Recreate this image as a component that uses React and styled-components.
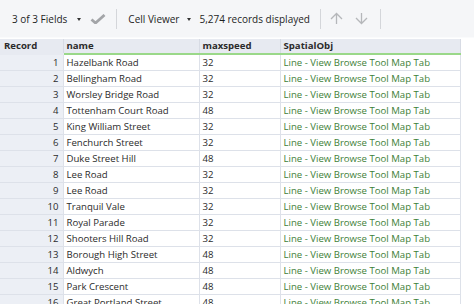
import React from "react";
import styled, { createGlobalStyle } from "styled-components";

const Global = createGlobalStyle`
  html, body { margin: 0; padding: 0; background: #ffffff; }
  body { font-family: "Open Sans", "Noto Sans", sans-serif; overflow: hidden; }
`;

const Page = styled.div`
  width: 474px;
  height: 304px;
  overflow: hidden;
  background: #ffffff;
`;

const Toolbar = styled.div`
  height: 37px;
  display: flex;
  align-items: center;
  padding-left: 12px;
  background: #f5f6f8;
  border-bottom: 1px solid #fafbfc;
  font-size: 10px;
  color: #1e1e1e;
`;

const Label = styled.span`
  white-space: nowrap;
`;

const Caret = styled.span`
  display: inline-block;
  width: 0;
  height: 0;
  margin: 1px ${(p) => p.$right || 10}px 0 ${(p) => p.$left || 8}px;
  border-left: 2.5px solid transparent;
  border-right: 2.5px solid transparent;
  border-top: 3px solid #333;
`;

const Sep = styled.span`
  width: 1px;
  height: 20px;
  background: #d4d6da;
  margin: 0 ${(p) => p.$right || 10}px 0 ${(p) => p.$left || 10}px;
`;

const IconBox = styled.span`
  display: inline-flex;
  align-items: center;
  margin-right: ${(p) => p.$gap || 0}px;
`;

const Table = styled.table`
  border-collapse: collapse;
  table-layout: fixed;
  width: 460px;
  font-size: 9.6px;
  margin-top: 1px;
`;

const Th = styled.th`
  height: 14px;
  padding: 0 0 0 ${(p) => (p.$rec ? 4 : 3)}px;
  text-align: left;
  font-weight: 700;
  color: #2b2b2b;
  background: #e7eaf1;
  border-right: 1px solid #d7dbe4;
  border-bottom: 2px solid ${(p) => (p.$rec ? "#e7eaf1" : "#9ad889")};
  line-height: 14px;
  white-space: nowrap;
`;

const Td = styled.td`
  height: 14px;
  padding: 1px ${(p) => (p.$rec ? 4 : 0)}px 0 ${(p) => (p.$rec ? 0 : 3)}px;
  line-height: 14px;
  text-align: ${(p) => (p.$rec ? "right" : "left")};
  color: ${(p) => (p.$geo ? "#3e7f38" : "#2b2b2b")};
  background: ${(p) => (p.$rec ? "#eceff5" : "#ffffff")};
  border-right: 1px solid #dde1e9;
  border-bottom: 1px solid #dde1e9;
  white-space: nowrap;
  overflow: hidden;
`;

const rows = [
  ["Hazelbank Road", 32],
  ["Bellingham Road", 32],
  ["Worsley Bridge Road", 32],
  ["Tottenham Court Road", 48],
  ["King William Street", 32],
  ["Fenchurch Street", 32],
  ["Duke Street Hill", 48],
  ["Lee Road", 32],
  ["Lee Road", 32],
  ["Tranquil Vale", 32],
  ["Royal Parade", 32],
  ["Shooters Hill Road", 32],
  ["Borough High Street", 48],
  ["Aldwych", 48],
  ["Park Crescent", 48],
  ["Great Portland Street", 48],
];

const App = () => {
  return (
    <Page>
      <Global />
      <Toolbar>
        <Label>3 of 3 Fields</Label>
        <Caret $left={10} $right={9} />
        <IconBox>
          <svg width="16" height="10" viewBox="0 0 16 10">
            <path d="M1.5 5.5 L5.5 9 L14.5 1" fill="none" stroke="#a3a5a8" strokeWidth="2.8" strokeLinejoin="round" />
          </svg>
        </IconBox>
        <Sep $left={10} $right={11} />
        <Label>Cell Viewer</Label>
        <Caret $left={8} $right={8} />
        <Label>5,274 records displayed</Label>
        <Sep $left={10} $right={9} />
        <IconBox $gap={12}>
          <svg width="13" height="13" viewBox="0 0 13 13">
            <path d="M6.5 12 V1.5 M1 7 L6.5 1.5 L12 7" fill="none" stroke="#b5b7ba" strokeWidth="1.3" />
          </svg>
        </IconBox>
        <IconBox>
          <svg width="13" height="13" viewBox="0 0 13 13">
            <path d="M6.5 1 V11.5 M1 6 L6.5 11.5 L12 6" fill="none" stroke="#b5b7ba" strokeWidth="1.3" />
          </svg>
        </IconBox>
        <Sep $left={12} $right={0} />
      </Toolbar>
      <Table>
        <colgroup>
          <col style={{ width: 63 }} />
          <col style={{ width: 136 }} />
          <col style={{ width: 81 }} />
          <col style={{ width: 180 }} />
        </colgroup>
        <thead>
          <tr>
            <Th $rec>Record</Th>
            <Th>name</Th>
            <Th>maxspeed</Th>
            <Th>SpatialObj</Th>
          </tr>
        </thead>
        <tbody>
          {rows.map(([name, speed], i) => (
            <tr key={i}>
              <Td $rec>{i + 1}</Td>
              <Td>{name}</Td>
              <Td>{speed}</Td>
              <Td $geo>Line - View Browse Tool Map Tab</Td>
            </tr>
          ))}
        </tbody>
      </Table>
    </Page>
  );
};

export default App;
